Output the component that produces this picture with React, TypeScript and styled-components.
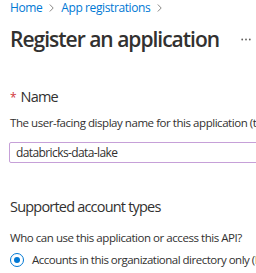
import React, { FC } from 'react';
import styled, { createGlobalStyle } from 'styled-components';

const GlobalStyle = createGlobalStyle`
  html, body {
    margin: 0;
    padding: 0;
    background: #ffffff;
    overflow: hidden;
  }
  body {
    font-family: 'Open Sans', 'Noto Sans', sans-serif;
    color: #323130;
  }
`;

const Page = styled.div`
  width: 256px;
  height: 273px;
  padding: 0 5px 0 10px;
  box-sizing: border-box;
  overflow: hidden;
  white-space: nowrap;
`;

const Breadcrumb = styled.nav`
  display: flex;
  align-items: center;
  gap: 7px;
  height: 16px;
  font-size: 12px;
  line-height: 16px;
  letter-spacing: -0.4px;
  color: #0078d4;
`;

const Crumb = styled.span`
  cursor: pointer;
`;

const TitleRow = styled.div`
  display: flex;
  align-items: center;
  justify-content: space-between;
  margin-top: 9px;
  height: 28px;
`;

const Title = styled.h1`
  margin: 0;
  font-size: 21px;
  line-height: 28px;
  font-weight: 600;
  letter-spacing: -1px;
  color: #323130;
`;

const Section = styled.section<{ $top: number }>`
  margin-top: ${(p) => p.$top}px;
`;

const SectionHeading = styled.div`
  display: flex;
  align-items: baseline;
  gap: 4px;
  font-size: 14.5px;
  line-height: 20px;
  height: 20px;
  letter-spacing: -0.8px;
`;

const Required = styled.span`
  color: #d13438;
  font-size: 12px;
  letter-spacing: 0;
`;

const Help = styled.div<{ $top: number }>`
  font-size: 11.5px;
  line-height: 16px;
  letter-spacing: -0.45px;
  margin-top: ${(p) => p.$top}px;
`;

const Input = styled.div`
  margin: 11px 0 0 -1px;
  height: 21px;
  width: 300px;
  border: 1px solid #c6a0d8;
  border-radius: 2px;
  box-sizing: border-box;
  padding-left: 6px;
  font-size: 12px;
  line-height: 19px;
  letter-spacing: -0.6px;
`;

const RadioRow = styled.label`
  display: flex;
  align-items: center;
  gap: 8px;
  margin-top: 6px;
  height: 16px;
  font-size: 11.5px;
  line-height: 16px;
  letter-spacing: -0.5px;
`;

const RadioDot = styled.span`
  flex: none;
  width: 14px;
  height: 14px;
  box-sizing: border-box;
  border-radius: 50%;
  border: 1px solid #0078d4;
  display: flex;
  align-items: center;
  justify-content: center;
  &::after {
    content: '';
    width: 6px;
    height: 6px;
    border-radius: 50%;
    background: #0078d4;
  }
`;

const Chevron: FC = () => (
  <svg width="5" height="10" viewBox="0 0 5 10" fill="none">
    <path d="M0.8 1.5 L4.2 5 L0.8 8.5" stroke="#8a8886" strokeWidth="1" />
  </svg>
);

const MoreIcon: FC = () => (
  <svg width="10" height="3" viewBox="0 0 10 3" fill="#605e5c">
    <circle cx="1.2" cy="1.5" r="0.9" />
    <circle cx="5" cy="1.5" r="0.9" />
    <circle cx="8.8" cy="1.5" r="0.9" />
  </svg>
);

const App: FC = () => {
  return (
    <Page>
      <GlobalStyle />
      <Breadcrumb>
        <Crumb>Home</Crumb>
        <Chevron />
        <Crumb>App registrations</Crumb>
        <Chevron />
      </Breadcrumb>
      <TitleRow>
        <Title>Register an application</Title>
        <MoreIcon />
      </TitleRow>
      <Section $top={34}>
        <SectionHeading>
          <Required>*</Required>
          <span>Name</span>
        </SectionHeading>
        <Help $top={8}>The user-facing display name for this application (this can be changed later).</Help>
        <Input>databricks-data-lake</Input>
      </Section>
      <Section $top={34}>
        <SectionHeading>Supported account types</SectionHeading>
        <Help $top={13}>Who can use this application or access this API?</Help>
        <RadioRow>
          <RadioDot />
          <span>Accounts in this organizational directory only (Default Directory only - Single tenant)</span>
        </RadioRow>
      </Section>
    </Page>
  );
};

export default App;
